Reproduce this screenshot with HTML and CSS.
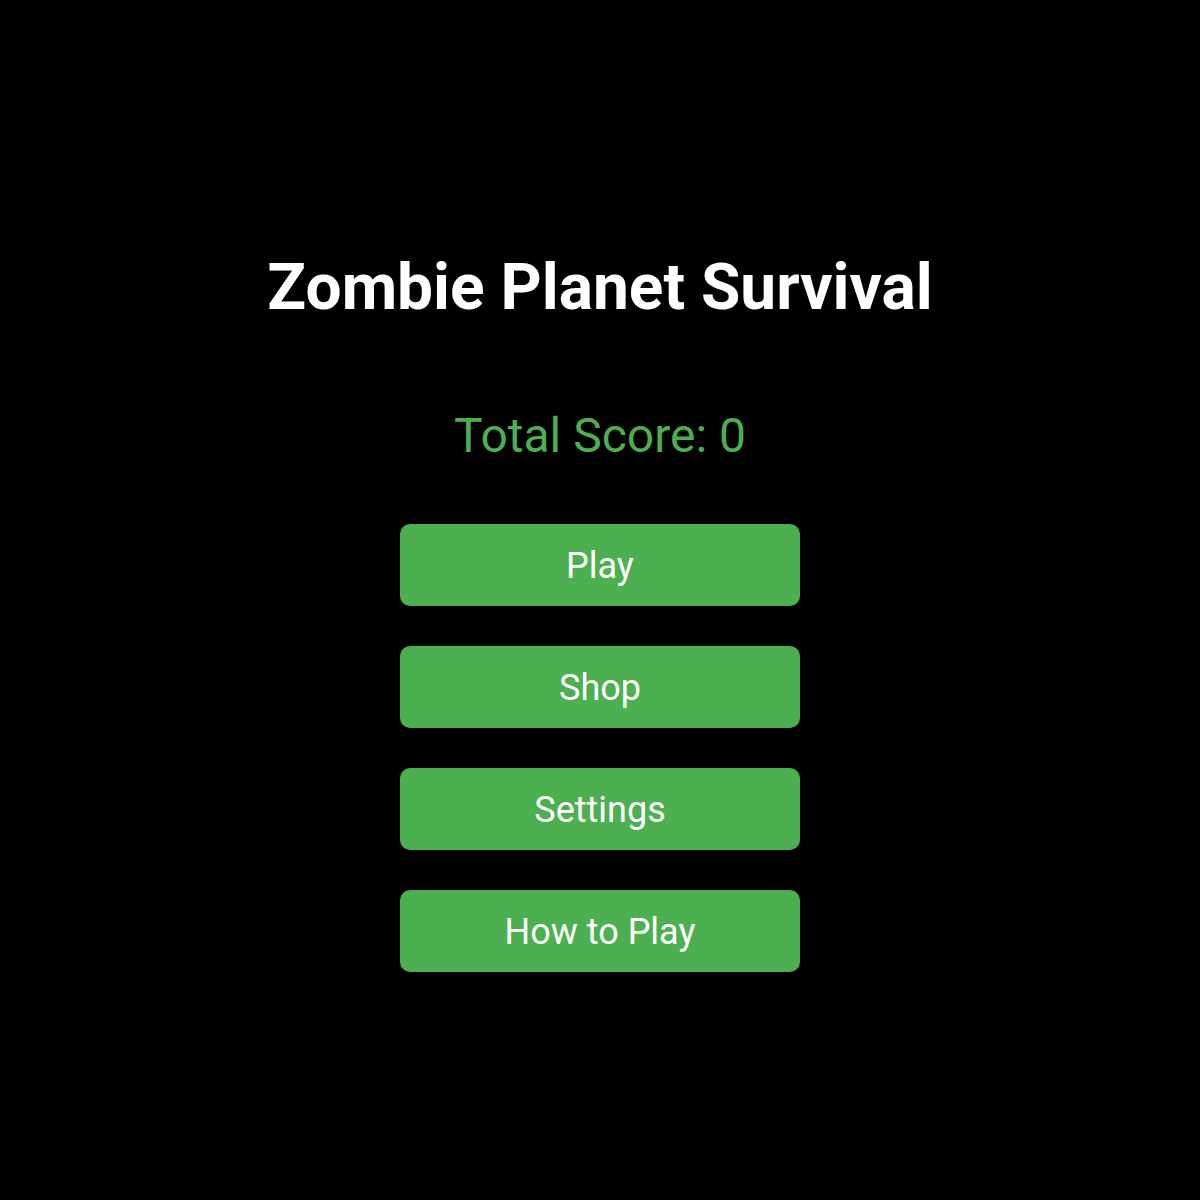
FILE: index.html
```html
<!DOCTYPE html>
<html>
<head>
<meta charset="utf-8">
<link rel="stylesheet" href="styles.css">
</head>
<body>
<main class="menu">
  <h1 class="title">Zombie Planet Survival</h1>
  <p class="score">Total Score: 0</p>
  <div class="buttons">
    <button class="btn">Play</button>
    <button class="btn">Shop</button>
    <button class="btn">Settings</button>
    <button class="btn">How to Play</button>
  </div>
</main>
</body>
</html>
```
FILE: styles.css
```css
html, body {
  margin: 0;
  padding: 0;
  background: #000;
}
body {
  font-family: Roboto, "Liberation Sans", sans-serif;
  color: #fff;
}
.menu {
  min-height: 1200px;
  box-sizing: border-box;
  padding-top: 250px;
  display: flex;
  flex-direction: column;
  align-items: center;
}
.title {
  margin: 0;
  font-size: 64px;
  font-weight: 700;
  line-height: 75px;
}
.score {
  margin: 83px 0 0;
  font-size: 48px;
  line-height: 56px;
  color: #4caf50;
}
.buttons {
  margin-top: 60px;
  display: flex;
  flex-direction: column;
  gap: 40px;
}
.btn {
  width: 400px;
  height: 82px;
  border: none;
  border-radius: 10px;
  background: #4caf50;
  color: #fff;
  font-family: Roboto, "Liberation Sans", sans-serif;
  font-size: 36px;
  padding: 2px 0 0;
}
```
